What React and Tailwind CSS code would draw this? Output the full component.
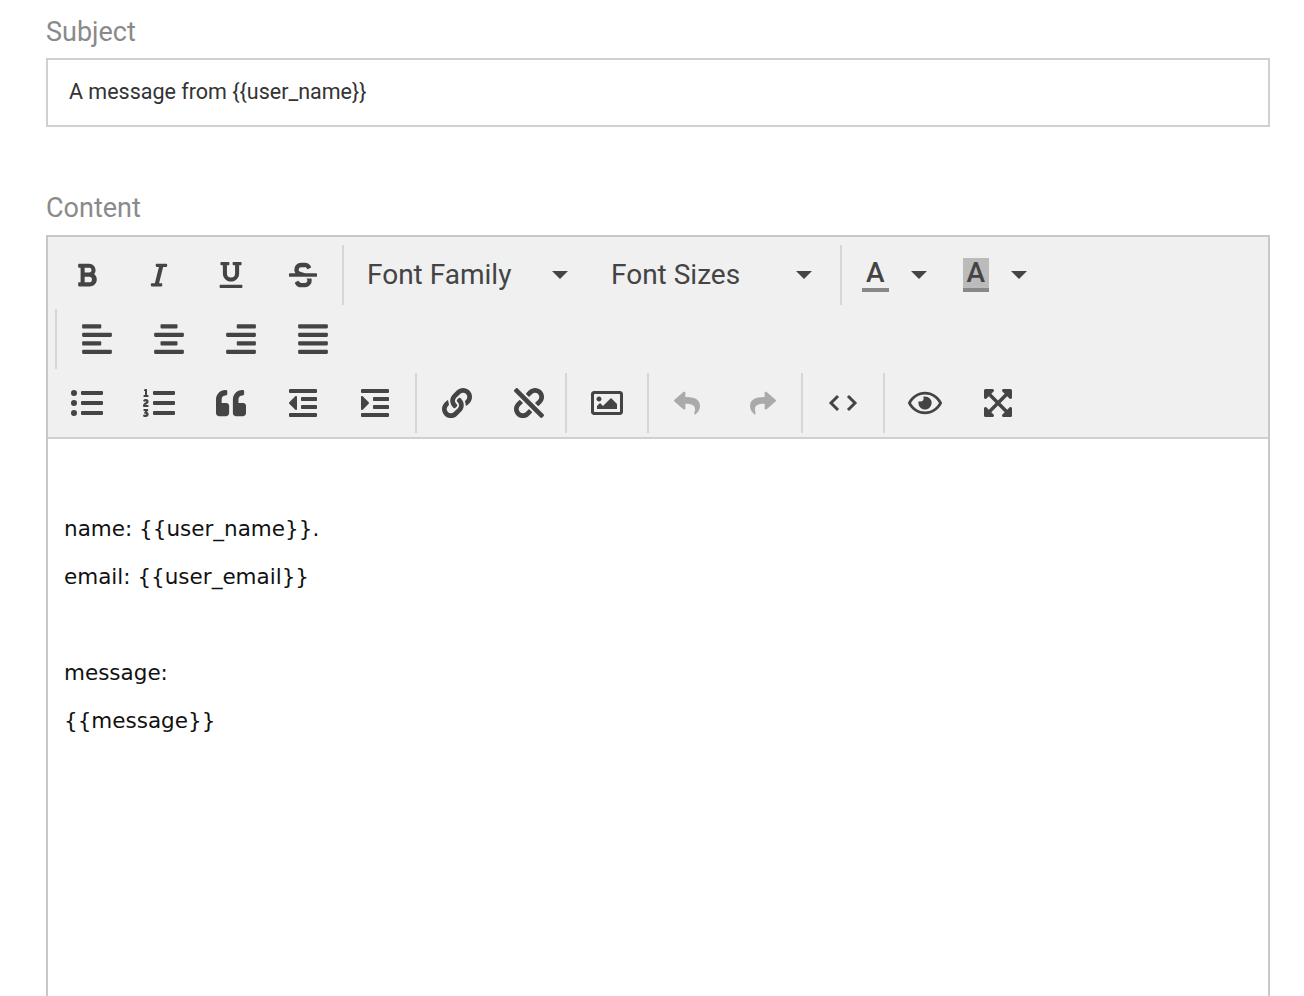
import React from "react";
import { FaBold, FaItalic, FaUnderline, FaStrikethrough, FaAlignLeft, FaAlignCenter, FaAlignRight, FaAlignJustify, FaListUl, FaListOl, FaQuoteLeft, FaOutdent, FaIndent, FaLink, FaUnlink, FaRegImage, FaReply, FaShare, FaRegEye, FaExpandArrowsAlt } from "react-icons/fa";

const Btn = ({ children, w = "w-[72px]", cls = "" }) => (
  <div className={`${w} h-[64px] flex items-center justify-center text-[#444] ${cls}`}>{children}</div>
);
const Sep = ({ cls = "" }) => <div className={`w-[2px] h-[60px] bg-[#d6d6d6] ${cls}`} />;
const Caret = () => <span className="inline-block w-0 h-0 border-l-[8px] border-r-[8px] border-t-[8px] border-l-transparent border-r-transparent border-t-[#444]" />;

export default function App() {
  return (
    <div className="bg-white min-h-[996px] pl-[46px] pr-[34px] pt-[16px] overflow-hidden" style={{ fontFamily: "Roboto, 'Liberation Sans', sans-serif" }}>
      <div className="text-[27px] text-[#8a8a8a] leading-[32px]">Subject</div>
      <div className="mt-[10px] h-[69px] border-2 border-[#d0d0d0] flex items-center px-[21px] text-[21.5px] text-[#333]">A message from {"{{user_name}}"}</div>
      <div className="mt-[65px] text-[27px] text-[#8a8a8a] leading-[32px]">Content</div>
      <div className="mt-[11px] border-2 border-b-0 border-[#c8c8c8] h-[800px]">
        <div className="bg-[#f0f0f0] border-b-2 border-[#d0d0d0] pl-[3px] pt-[6px] pb-[2px]">
          <div className="flex items-center">
            <Btn><FaBold size={26} /></Btn>
            <Btn><FaItalic size={26} /></Btn>
            <Btn><FaUnderline size={26} /></Btn>
            <Btn><FaStrikethrough size={28} /></Btn>
            <Sep cls="ml-[3px]" />
            <div className="w-[244px] h-[64px] flex items-center justify-between pl-[23px] pr-[20px] text-[28px] text-[#444]">Font Family<Caret /></div>
            <div className="w-[244px] h-[64px] flex items-center justify-between pl-[23px] pr-[20px] text-[28px] text-[#444]">Font Sizes<Caret /></div>
            <Sep cls="ml-[8px]" />
            <div className="h-[64px] flex items-center pl-[20px] gap-[22px] text-[#444]">
              <span className="text-[28px] font-medium leading-[30px] border-b-[4px] border-[#888] px-[4px]">A</span><Caret />
            </div>
            <div className="h-[64px] flex items-center pl-[36px] gap-[22px] text-[#444]">
              <span className="text-[28px] font-medium leading-[30px] bg-[#bbb] border-b-[4px] border-[#888] px-[4px]">A</span><Caret />
            </div>
          </div>
          <div className="flex items-center">
            <Sep cls="ml-[4px]" />
            <div className="flex pl-[4px]">
              <Btn><FaAlignLeft size={34} /></Btn>
              <Btn><FaAlignCenter size={34} /></Btn>
              <Btn><FaAlignRight size={34} /></Btn>
              <Btn><FaAlignJustify size={34} /></Btn>
            </div>
          </div>
          <div className="flex items-center">
            <Btn><FaListUl size={32} /></Btn>
            <Btn><FaListOl size={32} /></Btn>
            <Btn><FaQuoteLeft size={30} /></Btn>
            <Btn><FaOutdent size={32} /></Btn>
            <Btn><FaIndent size={32} /></Btn>
            <Sep cls="ml-[4px]" />
            <Btn w="w-[80px]"><FaLink size={30} /></Btn>
            <Btn w="w-[64px]"><FaUnlink size={30} /></Btn>
            <Sep cls="ml-[4px]" />
            <Btn w="w-[80px]"><FaRegImage size={32} /></Btn>
            <Sep />
            <Btn w="w-[76px]" cls="text-[#aaa]"><FaReply size={26} /></Btn>
            <Btn w="w-[76px]" cls="text-[#aaa]"><FaShare size={26} /></Btn>
            <Sep />
            <Btn w="w-[80px]">
              <svg width="30" height="20" viewBox="0 0 30 20" fill="none" stroke="#444" strokeWidth="3"><path d="M10 3 L3 10 L10 17 M20 3 L27 10 L20 17" /></svg>
            </Btn>
            <Sep />
            <Btn w="w-[80px]"><FaRegEye size={34} /></Btn>
            <Btn w="w-[66px]"><FaExpandArrowsAlt size={32} /></Btn>
          </div>
        </div>
        <div className="px-[16px] pt-[18px] text-[#111] leading-[48px]" style={{ fontFamily: "'DejaVu Sans', Verdana, sans-serif", fontSize: "21.5px" }}>
          <div>&nbsp;</div>
          <div>name: {"{{user_name}}"}.</div>
          <div>email: {"{{user_email}}"}</div>
          <div>&nbsp;</div>
          <div>message:</div>
          <div>{"{{message}}"}</div>
        </div>
      </div>
    </div>
  );
}
